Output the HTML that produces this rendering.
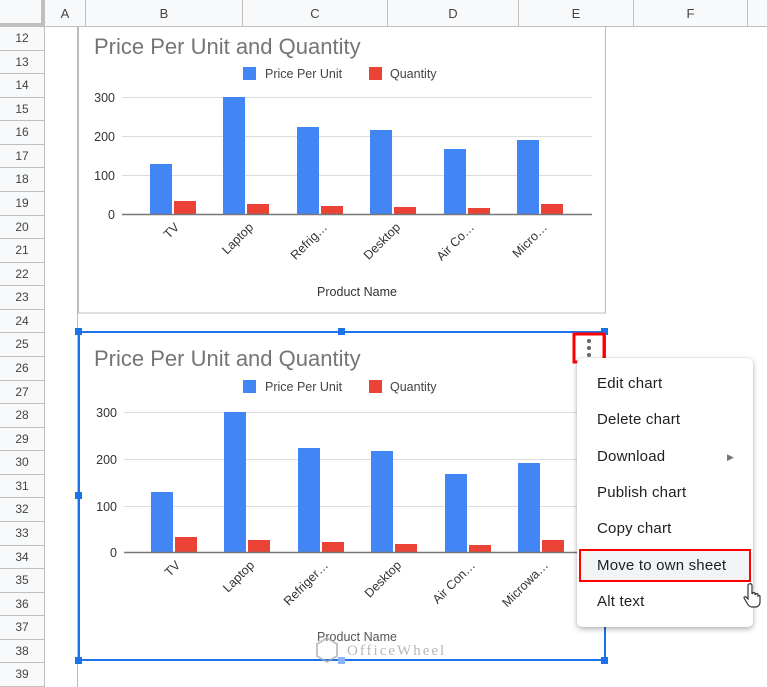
<!DOCTYPE html>
<html><head><meta charset="utf-8"><style>
*{margin:0;padding:0;box-sizing:border-box}
body{width:767px;height:687px;overflow:hidden;background:#fff;font-family:"Liberation Sans",Arial,sans-serif;position:relative}
.hdr{position:absolute;top:0;left:0;width:767px;height:27px;background:#f8f9fa;border-bottom:1px solid #c0c0c0;z-index:2}
.col{position:absolute;top:0;height:27px;border-right:1px solid #c0c0c0;font-size:13px;color:#444;text-align:center;line-height:27px}
.rows{position:absolute;left:0;top:27px;width:45px;height:660px;background:#f8f9fa;border-right:1px solid #c0c0c0}
.r{position:absolute;left:0;width:44px;height:23.57px;border-bottom:1px solid #c0c0c0;font-size:12px;color:#444;text-align:center;line-height:23px}
.menu{position:absolute;left:577px;top:358px;width:176px;height:269px;background:#fff;border-radius:5px;box-shadow:0 2px 6px rgba(0,0,0,.3),0 0 1px rgba(0,0,0,.2)}
.mi{position:absolute;left:20px;font-size:15px;color:#202124;letter-spacing:.2px}
</style></head><body>
<div class="hdr">
<div class="col" style="left:0;width:45px;border-right:4px solid #c0c0c0;border-bottom:4px solid #c0c0c0"></div>
<div class="col" style="left:45px;width:41px">A</div>
<div class="col" style="left:86px;width:157px">B</div>
<div class="col" style="left:243px;width:145px">C</div>
<div class="col" style="left:388px;width:131px">D</div>
<div class="col" style="left:519px;width:115px">E</div>
<div class="col" style="left:634px;width:114px">F</div>
<div class="col" style="left:748px;width:30px"></div>
</div>
<div class="rows">
<div class="r" style="top:0">12</div><div class="r" style="top:23.57px">13</div><div class="r" style="top:47.14px">14</div><div class="r" style="top:70.71px">15</div><div class="r" style="top:94.28px">16</div><div class="r" style="top:117.85px">17</div><div class="r" style="top:141.42px">18</div><div class="r" style="top:165px">19</div><div class="r" style="top:188.57px">20</div><div class="r" style="top:212.14px">21</div><div class="r" style="top:235.71px">22</div><div class="r" style="top:259.28px">23</div><div class="r" style="top:282.85px">24</div><div class="r" style="top:306.42px">25</div><div class="r" style="top:330px">26</div><div class="r" style="top:353.57px">27</div><div class="r" style="top:377.14px">28</div><div class="r" style="top:400.71px">29</div><div class="r" style="top:424.28px">30</div><div class="r" style="top:447.85px">31</div><div class="r" style="top:471.42px">32</div><div class="r" style="top:495px">33</div><div class="r" style="top:518.57px">34</div><div class="r" style="top:542.14px">35</div><div class="r" style="top:565.71px">36</div><div class="r" style="top:589.28px">37</div><div class="r" style="top:612.85px">38</div><div class="r" style="top:636.42px">39</div>
</div>
<div style="position:absolute;left:77px;top:27px;width:1px;height:660px;background:#bbb"></div>
<svg width="767" height="687" style="position:absolute;left:0;top:0" font-family="Liberation Sans,Arial,sans-serif">
<rect x="78.5" y="20" width="527" height="293" fill="#fff" stroke="#bdbdbd"/>
<text x="94" y="54" font-size="22" fill="#757575">Price Per Unit and Quantity</text>
<rect x="243" y="67" width="13" height="13" fill="#4285f4"/><text x="265" y="78" font-size="12.5" fill="#444">Price Per Unit</text>
<rect x="369" y="67" width="13" height="13" fill="#ea4335"/><text x="390" y="78" font-size="12.5" fill="#444">Quantity</text>
<g font-size="12.5" fill="#333" text-anchor="end">
<text x="115" y="102">300</text><text x="115" y="141">200</text><text x="115" y="180">100</text><text x="115" y="219">0</text></g>
<g stroke="#ddd"><line x1="122" y1="97.5" x2="592" y2="97.5"/><line x1="122" y1="136.5" x2="592" y2="136.5"/><line x1="122" y1="175.5" x2="592" y2="175.5"/></g>
<g fill="#4285f4"><rect x="150" y="164" width="22" height="50"/><rect x="223" y="97" width="22" height="117"/><rect x="297" y="127" width="22" height="87"/><rect x="370" y="130" width="22" height="84"/><rect x="444" y="149" width="22" height="65"/><rect x="517" y="140" width="22" height="74"/></g>
<g fill="#ea4335"><rect x="174" y="201" width="22" height="13"/><rect x="247" y="204" width="22" height="10"/><rect x="321" y="206" width="22" height="8"/><rect x="394" y="207" width="22" height="7"/><rect x="468" y="208" width="22" height="6"/><rect x="541" y="204" width="22" height="10"/></g>
<line x1="122" y1="214.5" x2="592" y2="214.5" stroke="#777" stroke-width="1.5"/>
<g font-size="12.5" fill="#333" text-anchor="end">
<text transform="translate(180,228) rotate(-45)">TV</text>
<text transform="translate(254,228) rotate(-45)">Laptop</text>
<text transform="translate(328,228) rotate(-45)">Refrig…</text>
<text transform="translate(401,228) rotate(-45)">Desktop</text>
<text transform="translate(475,228) rotate(-45)">Air Co…</text>
<text transform="translate(548,228) rotate(-45)">Micro…</text></g>
<text x="357" y="296" font-size="12.5" fill="#333" text-anchor="middle">Product Name</text>
<rect x="79" y="332" width="526" height="328" fill="#fff" stroke="#1a73e8" stroke-width="2"/>
<text x="94" y="366" font-size="22" fill="#757575">Price Per Unit and Quantity</text>
<rect x="243" y="380" width="13" height="13" fill="#4285f4"/><text x="265" y="391" font-size="12.5" fill="#444">Price Per Unit</text>
<rect x="369" y="380" width="13" height="13" fill="#ea4335"/><text x="390" y="391" font-size="12.5" fill="#444">Quantity</text>
<g font-size="12.5" fill="#333" text-anchor="end">
<text x="117" y="417">300</text><text x="117" y="464">200</text><text x="117" y="511">100</text><text x="117" y="557">0</text></g>
<g stroke="#ddd"><line x1="124" y1="412.5" x2="592" y2="412.5"/><line x1="124" y1="459.5" x2="592" y2="459.5"/><line x1="124" y1="506.5" x2="592" y2="506.5"/></g>
<g fill="#4285f4"><rect x="151" y="492" width="22" height="60"/><rect x="224" y="412" width="22" height="140"/><rect x="298" y="448" width="22" height="104"/><rect x="371" y="451" width="22" height="101"/><rect x="445" y="474" width="22" height="78"/><rect x="518" y="463" width="22" height="89"/></g>
<g fill="#ea4335"><rect x="175" y="537" width="22" height="15"/><rect x="248" y="540" width="22" height="12"/><rect x="322" y="542" width="22" height="10"/><rect x="395" y="544" width="22" height="8"/><rect x="469" y="545" width="22" height="7"/><rect x="542" y="540" width="22" height="12"/></g>
<line x1="124" y1="552.5" x2="592" y2="552.5" stroke="#777" stroke-width="1.5"/>
<g font-size="12.5" fill="#333" text-anchor="end">
<text transform="translate(181,566) rotate(-45)">TV</text>
<text transform="translate(255,566) rotate(-45)">Laptop</text>
<text transform="translate(329,566) rotate(-45)">Refriger…</text>
<text transform="translate(402,566) rotate(-45)">Desktop</text>
<text transform="translate(476,566) rotate(-45)">Air Con…</text>
<text transform="translate(549,566) rotate(-45)">Microwa…</text></g>
<text x="357" y="641" font-size="12.5" fill="#555" text-anchor="middle">Product Name</text>
<text x="347" y="655" font-size="15" fill="#999" letter-spacing="2" font-family="Liberation Serif,serif" opacity=".7">OfficeWheel</text>
<path d="M327 638 l10 6 v12 l-10 6 l-10 -6 v-12z" fill="none" stroke="#aaa" stroke-width="2" opacity=".7"/>
<g fill="#1a73e8"><rect x="75" y="328" width="7" height="7"/><rect x="601" y="328" width="7" height="7"/><rect x="75" y="657" width="7" height="7"/><rect x="601" y="657" width="7" height="7"/><rect x="338" y="328" width="7" height="7"/><rect x="338" y="657" width="7" height="7" fill="#8ab4f8"/><rect x="75" y="492" width="7" height="7"/></g>
<rect x="574" y="334" width="30" height="28" fill="#fff" stroke="#f00" stroke-width="3"/>
<g fill="#666"><circle cx="589" cy="341" r="2"/><circle cx="589" cy="348" r="2"/><circle cx="589" cy="355" r="2"/></g>
</svg>
<div class="menu">
<div class="mi" style="top:17px">Edit chart</div>
<div class="mi" style="top:53px">Delete chart</div>
<div class="mi" style="top:90px">Download</div>
<div style="position:absolute;left:150px;top:94px;font-size:9px;color:#777">▶</div>
<div class="mi" style="top:126px">Publish chart</div>
<div class="mi" style="top:162px">Copy chart</div>
<div style="position:absolute;left:2px;top:191px;width:172px;height:33px;background:#f1f3f4;border:2.5px solid #f00"></div>
<div class="mi" style="top:199px">Move to own sheet</div>
<div class="mi" style="top:235px">Alt text</div>
</div>
<svg width="20" height="26" style="position:absolute;left:743px;top:582px" viewBox="0 0 20 26"><path d="M6 2 q2-1 3 1 v9 q1-2 3-1 v2 q1-2 3-1 v2 q1-1 2 0 v6 q0 4-4 5 h-4 q-3 0-5-4 l-3-5 q0-2 2-1 l2 2 v-14z" fill="#fff" stroke="#333" stroke-width="1.2"/></svg>
</body></html>
